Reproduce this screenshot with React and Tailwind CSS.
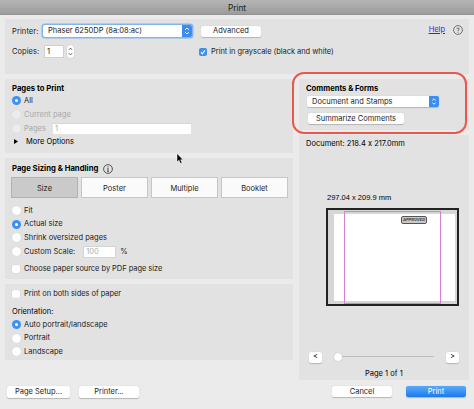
import clsx from 'clsx';

function Radio({ label, checked, disabled, className, children }) {
	return (
		<div
			className={clsx(
				'flex items-center',
				disabled && 'text-[#a8a8a8]',
				className
			)}
		>
			<span
				className={clsx(
					'flex w-[9px] h-[9px] mr-[3px] rounded-full items-center justify-center shrink-0',
					checked && 'bg-[#3d8ff0]',
					!checked && !disabled && 'bg-white shadow-[0_0_1px_#bbb]',
					disabled && 'bg-[#ececec] shadow-[0_0_1px_#ccc]'
				)}
			>
				{checked && <span className="w-[3px] h-[3px] rounded-full bg-white" />}
			</span>
			<span>{label}</span>
			{children}
		</div>
	);
}

function Checkbox({ label, checked, className }) {
	return (
		<div className={clsx('flex items-center tracking-[-0.05px]', className)}>
			<span
				className={clsx(
					'flex w-[8px] h-[8px] mr-[4px] rounded-[2px] items-center justify-center shrink-0',
					checked ? 'bg-[#3d8ff0]' : 'bg-white shadow-[0_0_1px_#bbb]'
				)}
			>
				{checked && (
					<svg viewBox="0 0 8 8" className="w-[8px] h-[8px]" fill="none" stroke="white" strokeWidth="1.1">
						<path d="M2 4.2 L3.4 5.8 L6 2.2" />
					</svg>
				)}
			</span>
			<span>{label}</span>
		</div>
	);
}

function Chevrons({ className }) {
	return (
		<svg viewBox="0 0 10 12" className={className} fill="none" stroke="currentColor" strokeWidth="1">
			<path d="M3.2 4.8 L5 3 L6.8 4.8 M3.2 7.2 L5 9 L6.8 7.2" />
		</svg>
	);
}

function Button({ className, children }) {
	return (
		<button
			className={clsx(
				'flex items-center justify-center rounded-[2px] shadow-[0_0.5px_1px_#b5b5b5] shrink-0',
				className
			)}
		>
			{children}
		</button>
	);
}

const tabs = ['Size', 'Poster', 'Multiple', 'Booklet'];

export default function App() {
	return (
		<div className="relative w-[474px] h-[409px] bg-[#ebebeb] overflow-hidden text-[7.5px] leading-[10px] text-[#1c1c1c] whitespace-nowrap font-['Inter','Liberation_Sans',sans-serif] [font-feature-settings:'calt'_0]">
			<header className="h-[15px] pt-px flex items-center justify-center bg-linear-to-b from-[#b5b5b5] to-[#9c9c9c] border-b border-[#929292] text-[8.3px]">
				Print
			</header>

			<section className="mt-[4px] mx-[5px] h-[55px] bg-[#e2e2e2] pl-[7px] pr-[6px] pt-[5px]">
				<div className="flex items-center h-[14px]">
					<span className="w-[31px] pt-px tracking-[0.1px]">Printer:</span>
					<div className="flex items-center w-[149px] h-[12px] rounded-[2px] bg-white shadow-[0_0_0_1.5px_#83b4ef] pl-[5px]">
						<span className="grow">Phaser 6250DP (8a:08:ac)</span>
						<Chevrons className="w-[10px] h-[12px] rounded-r-[2px] bg-[#3b8df2] text-white" />
					</div>
					<Button className="w-[60px] h-[11px] ml-[9px] bg-white">Advanced</Button>
					<a className="ml-auto -mt-[3px] text-[7.5px] text-[#3a1fe0] underline">Help</a>
					<svg viewBox="0 0 10 10" className="w-[10px] h-[10px] ml-[8px] -mt-[3px]" fill="none" stroke="#555" strokeWidth="0.8">
						<circle cx="5" cy="5" r="4.4" />
						<path d="M3.8 4 A1.2 1.1 0 1 1 5 5.2 V6 M5 6.8 V7.6" />
					</svg>
				</div>
				<div className="flex items-center h-[14px] mt-[6px]">
					<span className="w-[32px] pt-px tracking-[0.05px]">Copies:</span>
					<span className="w-[20px] h-[13px] bg-white border border-[#d0d0d0] pl-[2px] leading-[12px]">1</span>
					<svg viewBox="0 0 7 13" className="w-[7px] h-[13px] ml-[3px] rounded-[3px] bg-white shadow-[0_0_1px_#999]" fill="none" stroke="#444" strokeWidth="0.9">
						<path d="M1.9 4.8 L3.5 3.1 L5.1 4.8 M1.9 8.2 L3.5 9.9 L5.1 8.2" />
					</svg>
					<Checkbox checked label="Print in grayscale (black and white)" className="ml-[125px] pt-px" />
				</div>
			</section>

			<div className="flex mx-[5px] mt-[5px]">
				<div className="w-[288px] mr-[6px] flex flex-col">
					<section className="h-[74px] bg-[#e2e2e2] pl-[7px] pt-[5px]">
						<h2 className="font-bold text-[7.7px] text-black">Pages to Print</h2>
						<Radio checked label="All" className="h-[13px]" />
						<Radio disabled label="Current page" className="h-[15px]" />
						<Radio disabled label="Pages" className="h-[13px]">
							<span className="w-[138px] h-[11px] ml-[7px] pl-[2px] bg-white border-t border-[#d6d6d6]">1</span>
						</Radio>
						<div className="flex items-center h-[13px]">
							<svg viewBox="0 0 4 5" className="w-[4px] h-[5px] ml-[2px] mr-[8px]">
								<path d="M0 0 L4 2.5 L0 5 Z" />
							</svg>
							<span className="text-black">More Options</span>
						</div>
					</section>

					<section className="h-[121px] mt-[5px] bg-[#e2e2e2] pl-[7px] pt-[5px]">
						<div className="flex items-center h-[11px]">
							<h2 className="font-bold text-[7.7px] text-black">Page Sizing &amp; Handling</h2>
							<svg viewBox="0 0 10 10" className="w-[10px] h-[10px] ml-[5px]" fill="none" stroke="#333" strokeWidth="0.8">
								<circle cx="5" cy="5" r="4.4" />
								<path d="M5 2.3 V3.3 M4.2 4.2 H5 V7.3 M4 7.3 H6" />
							</svg>
						</div>
						<div className="flex gap-[3px] mt-[3px] -ml-px">
							{tabs.map((tab, i) => (
								<div
									key={tab}
									className={clsx(
										'w-[67px] h-[21px] pt-[2px] flex items-center justify-center border',
										i === 0
											? 'bg-[#cacaca] border-[#b2b2b2]'
											: 'bg-[#fafafa] border-[#c6c6c6]'
									)}
								>
									{tab}
								</div>
							))}
						</div>
						<Radio label="Fit" className="h-[13px] mt-[6px]" />
						<Radio checked label="Actual size" className="h-[14px]" />
						<Radio label="Shrink oversized pages" className="h-[13px]" />
						<Radio label="Custom Scale:" className="h-[15px]">
							<span className="w-[33px] h-[12px] ml-[8px] pl-[2px] bg-white border border-[#d4d4d4] text-[#b0b0b0]">100</span>
							<span className="ml-[4px]">%</span>
						</Radio>
						<Checkbox label="Choose paper source by PDF page size" className="h-[14px] mt-[3px]" />
					</section>

					<section className="h-[76px] mt-[5px] bg-[#e2e2e2] pl-[7px] pt-[4px]">
						<Checkbox label="Print on both sides of paper" className="h-[12px]" />
						<div className="mt-[7px] h-[11px] text-black">Orientation:</div>
						<Radio checked label="Auto portrait/landscape" className="h-[13px]" />
						<Radio label="Portrait" className="h-[14px]" />
						<Radio label="Landscape" className="h-[13px]" />
					</section>
				</div>

				<div className="w-[170px] flex flex-col">
					<section className="h-[51px] bg-[#e2e2e2] pl-[7px] pt-[5px]">
						<h2 className="font-bold text-[7.6px] text-black">Comments &amp; Forms</h2>
						<div className="flex items-center w-[132px] h-[11px] mt-[2px] ml-px rounded-[2px] bg-white shadow-[0_0.5px_1px_#b5b5b5] pl-[5px]">
							<span className="grow">Document and Stamps</span>
							<Chevrons className="w-[10px] h-[11px] rounded-r-[2px] bg-[#3b8df2] text-white" />
						</div>
						<Button className="w-[96px] h-[11px] mt-[6px] ml-[2px] bg-white">Summarize Comments</Button>
					</section>

					<section className="h-[245px] mt-[5px] bg-[#e2e2e2] pl-[7px] pt-[4px] text-black">
						<div>Document: 218.4 x 217.0mm</div>
						<div className="mt-[44px] ml-[21px] font-['Liberation_Sans',sans-serif]">297.04 x 209.9 mm</div>
						<div className="flex w-[133px] h-[98px] mt-[5px] ml-[20px] border-2 border-[#222] bg-[#d6d6d6] pt-[4px] pb-[3px] pl-[6px] pr-[2px]">
							<div className="relative grow bg-white">
								<div className="absolute left-[10px] -top-[3px] w-[97px] h-[93px] border border-[#d580d0]" />
								<div className="absolute left-[67px] top-[2px] w-[26px] h-[8px] flex items-center justify-center rounded-[2px] border border-[#555] bg-[#c9c9cd] text-[4px] font-bold italic text-[#444]">
									APPROVED
								</div>
							</div>
						</div>
						<div className="flex items-center h-[12px] mt-[45px] ml-[3px]">
							<Button className="w-[13px] h-[11px] bg-white">&lt;</Button>
							<div className="flex items-center w-[100px] ml-[12px] -mt-px">
								<span className="w-[8px] h-[8px] rounded-full bg-white shadow-[0_0_1px_#999]" />
								<span className="grow h-px bg-[#bcbcbc]" />
							</div>
							<Button className="w-[13px] h-[11px] ml-[12px] bg-white">&gt;</Button>
						</div>
						<div className="mt-[6px] pl-[59px]">Page 1 of 1</div>
					</section>
				</div>
			</div>

			<footer className="flex mt-[6px] pl-[7px]">
				<Button className="w-[63px] h-[12px] bg-white">Page Setup...</Button>
				<Button className="w-[60px] h-[12px] ml-[9px] bg-white">Printer...</Button>
				<Button className="w-[60px] h-[11px] ml-[193px] bg-white">Cancel</Button>
				<Button className="w-[60px] h-[11px] ml-[14px] bg-linear-to-b from-[#5aa9f8] to-[#1a79ee] text-white">Print</Button>
			</footer>

			{/* callout around Comments & Forms */}
			<div className="absolute left-[292px] top-[72px] w-[175px] h-[62px] rounded-[12px] border-2 border-[#e8584c]" />

			<svg viewBox="0 0 8 12" className="absolute left-[176px] top-[153px] w-[8px] h-[12px]">
				<path d="M1 0.5 V9 L3 7.2 L4.5 10.5 L6 9.8 L4.6 6.7 H7 Z" stroke="white" strokeWidth="0.5" />
			</svg>
		</div>
	);
}
